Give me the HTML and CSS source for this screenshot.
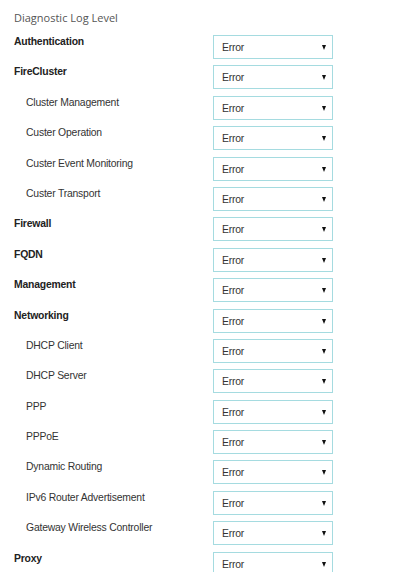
FILE: index.html
```html
<!DOCTYPE html>
<html>
<head>
<meta charset="utf-8">
<link rel="stylesheet" href="styles.css">
</head>
<body>
<div class="panel">
  <div class="title">Diagnostic Log Level</div>
  <div class="rows">
    <div class="row"><span class="label main">Authentication</span><div class="sel"><span>Error</span><span class="arrow"></span></div></div>
    <div class="row"><span class="label main">FireCluster</span><div class="sel"><span>Error</span><span class="arrow"></span></div></div>
    <div class="row"><span class="label sub">Cluster Management</span><div class="sel"><span>Error</span><span class="arrow"></span></div></div>
    <div class="row"><span class="label sub">Custer Operation</span><div class="sel"><span>Error</span><span class="arrow"></span></div></div>
    <div class="row"><span class="label sub">Custer Event Monitoring</span><div class="sel"><span>Error</span><span class="arrow"></span></div></div>
    <div class="row"><span class="label sub">Custer Transport</span><div class="sel"><span>Error</span><span class="arrow"></span></div></div>
    <div class="row"><span class="label main">Firewall</span><div class="sel"><span>Error</span><span class="arrow"></span></div></div>
    <div class="row"><span class="label main">FQDN</span><div class="sel"><span>Error</span><span class="arrow"></span></div></div>
    <div class="row"><span class="label main">Management</span><div class="sel"><span>Error</span><span class="arrow"></span></div></div>
    <div class="row"><span class="label main">Networking</span><div class="sel"><span>Error</span><span class="arrow"></span></div></div>
    <div class="row"><span class="label sub">DHCP Client</span><div class="sel"><span>Error</span><span class="arrow"></span></div></div>
    <div class="row"><span class="label sub">DHCP Server</span><div class="sel"><span>Error</span><span class="arrow"></span></div></div>
    <div class="row"><span class="label sub">PPP</span><div class="sel"><span>Error</span><span class="arrow"></span></div></div>
    <div class="row"><span class="label sub">PPPoE</span><div class="sel"><span>Error</span><span class="arrow"></span></div></div>
    <div class="row"><span class="label sub">Dynamic Routing</span><div class="sel"><span>Error</span><span class="arrow"></span></div></div>
    <div class="row"><span class="label sub">IPv6 Router Advertisement</span><div class="sel"><span>Error</span><span class="arrow"></span></div></div>
    <div class="row"><span class="label sub">Gateway Wireless Controller</span><div class="sel"><span>Error</span><span class="arrow"></span></div></div>
    <div class="row"><span class="label main">Proxy</span><div class="sel"><span>Error</span><span class="arrow"></span></div></div>
  </div>
</div>
</body>
</html>
```
FILE: styles.css
```css
html, body {
  margin: 0;
  padding: 0;
  background: #ffffff;
  height: 572px;
  overflow: hidden;
}
.panel {
  padding-left: 14px;
  font-family: "Liberation Sans", Arial, sans-serif;
}
.title {
  font-family: "Open Sans", sans-serif;
  font-size: 11px;
  color: #555;
  height: 32px;
  line-height: 16px;
  padding-top: 10px;
  box-sizing: border-box;
}
.rows {
  display: flex;
  flex-direction: column;
}
.row {
  display: flex;
  align-items: flex-start;
  height: 30.4px;
  flex: none;
}
.label {
  width: 199px;
  font-size: 10.4px;
  letter-spacing: -0.2px;
  line-height: 13px;
  padding-top: 3px;
  color: #222;
}
.label.main {
  font-weight: bold;
}
.label.sub {
  padding-left: 12px;
  width: 187px;
  padding-top: 3px;
  color: #333;
}
.sel {
  margin-top: 3px;
  width: 120px;
  height: 24px;
  box-sizing: border-box;
  border: 1px solid #a5dbe0;
  display: flex;
  align-items: center;
  justify-content: space-between;
  padding: 1px 6px 0 8px;
  font-size: 10.4px;
  letter-spacing: -0.2px;
  color: #333;
}
.arrow {
  width: 0;
  height: 0;
  border-left: 2.5px solid transparent;
  border-right: 2.5px solid transparent;
  border-top: 5px solid #111;
}
```
